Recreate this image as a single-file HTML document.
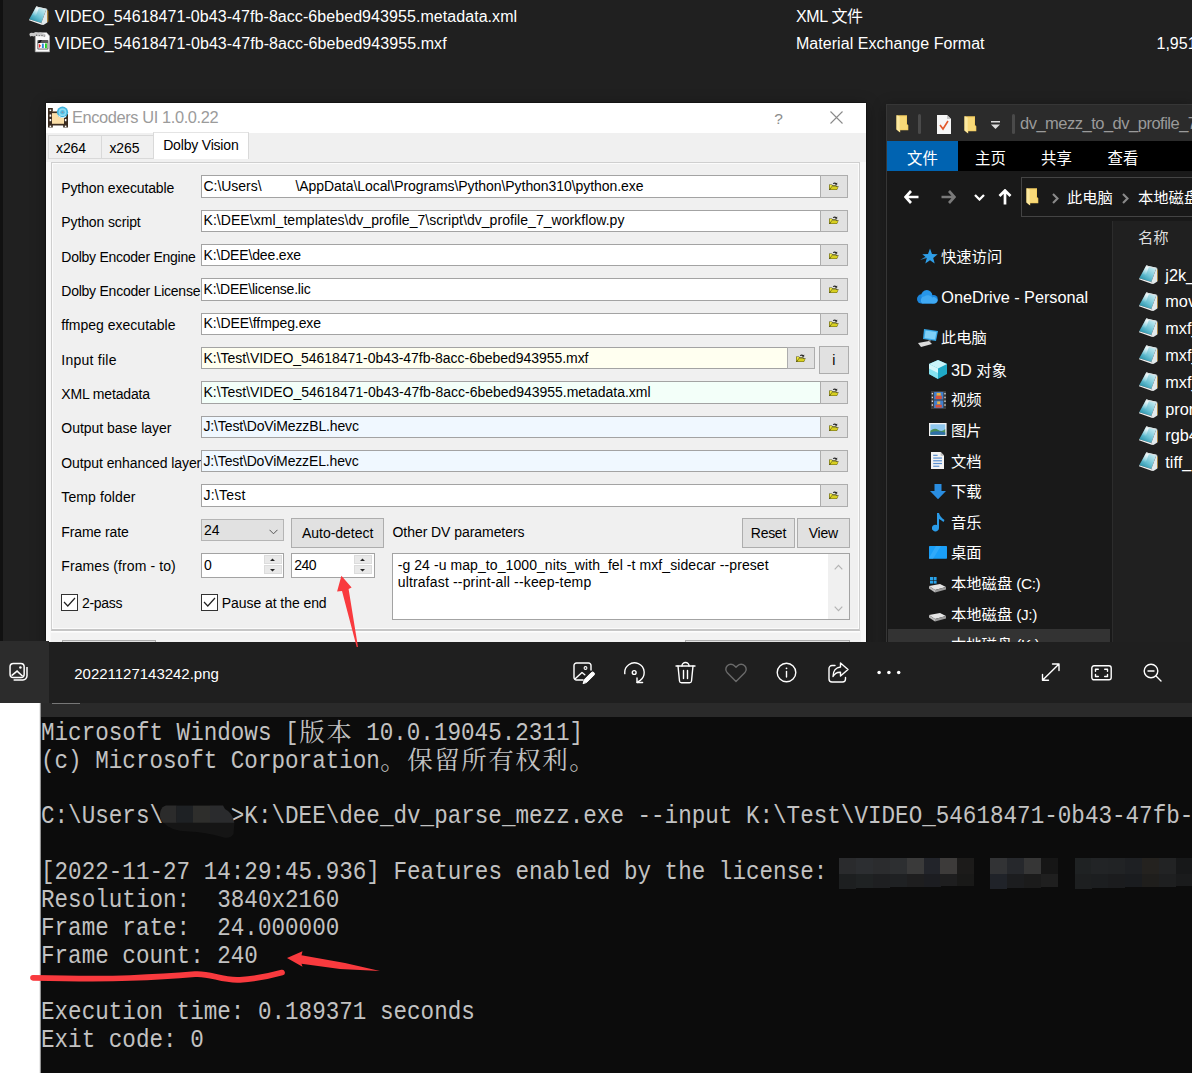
<!DOCTYPE html><html lang="zh-CN"><head><meta charset="utf-8"><title>screenshot</title><style>
*{box-sizing:border-box;margin:0;padding:0}
html,body{width:1192px;height:1073px;overflow:hidden;background:#202020}
body{position:relative;font-family:"Liberation Sans","Noto Sans CJK SC",sans-serif;color:#fff}
.abs{position:absolute}
.t{position:absolute;white-space:pre}
#enc{position:absolute;left:46px;top:103px;width:820px;height:545px;background:#f0f0f0;color:#000;font-size:14px;box-shadow:0 0 0 .6px rgba(0,0,0,.45),0 3px 14px rgba(0,0,0,.38)}
#enc .title{position:absolute;left:0;top:0;width:820px;height:30px;background:#fff}
#enc .inp{position:absolute;left:155px;height:22.4px;border:1px solid #a3a3a3;background:#fff}
#enc .btn{position:absolute;background:#e1e1e1;border:1px solid #adadad}
#enc .tab{position:absolute;border:1px solid #d9d9d9;background:#f0f0f0}
#ex2{position:absolute;left:886px;top:104px;width:306px;height:545px;background:#191919;overflow:hidden;box-shadow:0 2px 12px rgba(0,0,0,.35)}
#bar{position:absolute;left:0;top:642px;width:1192px;height:61px;background:#1f1f1f}
#cmd{position:absolute;left:40px;top:703px;width:1152px;height:370px;background:#0c0c0c;overflow:hidden}
.ln{position:absolute;left:0;white-space:pre;color:#c2c2c2;font-family:"Liberation Mono","Noto Serif CJK SC",monospace;font-size:26.5px;line-height:30px;height:30px;transform-origin:0 50%;transform:scaleX(.8525)}
.ln .cj{font-family:"Noto Serif CJK SC","Noto Sans CJK SC",serif;font-size:25.5px;display:inline-block;line-height:30px;vertical-align:top;text-align:left;white-space:pre}
.ln .cj b{display:inline-block;font-weight:normal;letter-spacing:1.5px;transform-origin:0 50%;transform:scaleX(1.173);position:relative;left:.9px;top:-2.6px}
</style></head><body>
<div class="abs" style="left:0;top:0;width:3px;height:642px;background:#111"></div>
<svg width="0" height="0" style="position:absolute"><defs><linearGradient id="ng" x1=".1" y1=".95" x2=".75" y2=".05"><stop offset="0" stop-color="#1b87a0"/><stop offset=".45" stop-color="#69c1d4"/><stop offset="1" stop-color="#c9ecf2"/></linearGradient><linearGradient id="nh" x1=".6" y1="0" x2=".35" y2="1"><stop offset="0" stop-color="#fff" stop-opacity=".9"/><stop offset=".65" stop-color="#fff" stop-opacity="0"/></linearGradient></defs></svg>
<svg class="abs" style="left:29.3px;top:5.8px" width="19.3" height="19" viewBox="0 0 19.3 19"><path d="M7.3 .6 L17.5 2.8 L12.3 17 L.2 13.2Z" fill="url(#ng)"/><path d="M7.3 .6 L10.2 1.2 L5 14.7 L.2 13.2Z" fill="url(#nh)"/><path d="M17.5 2.8 L18.3 3.5 V16.5 L14.5 19 L12.3 17Z" fill="#e3eaec"/><path d="M18.3 4 L19.3 5 V15.5 L18.3 16.5Z" fill="#c8922e"/><path d="M.2 13.2 L12.3 17 L14.5 19 L13.3 19 L0 14.3Z" fill="#f2f2f2"/><path d="M7.3 .6 L17.5 2.8 L17.2 3.7 L7 1.5Z" fill="#dde1e1"/></svg>
<svg class="abs" style="left:28.5px;top:32px" width="21" height="20.5" viewBox="0 0 21 20.5"><path d="M6.2 .5 H17.5 L20.7 4 V19.9 H6.2 Z" fill="#fbfbfb" stroke="#8f8f8f" stroke-width=".7"/><path d="M.3 2 q1.5 -2 4 -1 q2.5 -1.5 5 0 q2.5 -1 4.5 .5 q2 -.5 3 1.5 l-.8 2.2 q-1.5 -1.2 -3 -.6 q-2 -1.3 -4 -.2 q-2.3 -1.2 -4.4 0 q-1.8 -.9 -3.5 .2 Z" fill="#c9c9c9"/><g fill="#6b6b6b"><circle cx="7.6" cy="3.3" r=".7"/><circle cx="10.3" cy="3.6" r=".7"/><circle cx="13" cy="3.4" r=".7"/><circle cx="15.3" cy="4" r=".6"/></g><rect x="8.4" y="8" width="11" height="9.6" rx=".8" fill="#585858"/><path d="M8.6 11 L10.8 8 L13 8.2 L11 11Z" fill="#111"/><rect x="9.3" y="11" width="9.2" height="5.6" fill="#fdfdfd"/><path d="M9.9 11.4 L12 13.8 L9.9 16.2 Z" fill="#f02828"/><rect x="12.9" y="11.6" width="1.9" height="4.4" fill="#2f86d8"/><rect x="16" y="11.4" width="1.9" height="4.8" fill="#22d322"/></svg>
<div class="t" style="left:54.7px;top:7.00px;font-size:16px;line-height:20px;height:20px;letter-spacing:0.064px;">VIDEO_54618471-0b43-47fb-8acc-6bebed943955.metadata.xml</div>
<div class="t" style="left:54.7px;top:34.20px;font-size:16px;line-height:20px;height:20px;letter-spacing:0.071px;">VIDEO_54618471-0b43-47fb-8acc-6bebed943955.mxf</div>
<div class="t" style="left:796px;top:7.00px;font-size:16px;line-height:20px;height:20px;letter-spacing:-0.328px;">XML 文件</div>
<div class="t" style="left:796px;top:34.20px;font-size:16px;line-height:20px;height:20px;letter-spacing:0.04px;">Material Exchange Format</div>
<div class="t" style="left:1156.5px;top:34.20px;font-size:16px;line-height:20px;height:20px;">1,951</div>
<div id="enc">
<div class="title"></div>
<svg class="abs" style="left:2px;top:2px" width="22" height="23" viewBox="0 0 22 23"><rect x="0" y="3" width="4.8" height="19.5" fill="#3b2c20"/><rect x="15.2" y="9" width="4.8" height="13.5" fill="#3b2c20"/><rect x="4" y="6.5" width="12" height="13.5" fill="#fbdfa8"/><rect x="0" y="6.5" width="10" height="1.6" fill="#3b2c20"/><rect x="0" y="18.8" width="20" height="1.7" fill="#3b2c20"/><g fill="#fff"><rect x="1.6" y="4.5" width="1.6" height="1.6"/><rect x="1.6" y="9.5" width="1.6" height="2.2"/><rect x="1.6" y="14" width="1.6" height="2.2"/><rect x="1.6" y="20.6" width="1.6" height="1.5"/><rect x="16.8" y="14" width="1.6" height="2.2"/><rect x="16.8" y="20.6" width="1.6" height="1.5"/></g><circle cx="14.5" cy="7.2" r="5.6" fill="#3fb4de"/><circle cx="14.5" cy="7.2" r="3.9" fill="#8fdcf2"/><circle cx="14.5" cy="7.2" r="2.3" fill="#4fbfe6"/><circle cx="14.5" cy="7.2" r="1" fill="#8a94a8"/><path d="M10.5 10.5 A5.6 5.6 0 0 0 18 11.5" stroke="#e9f8fd" stroke-width="1.1" fill="none"/></svg>
<div class="t" style="left:25.9px;top:4.30px;font-size:16.4px;line-height:20px;height:20px;letter-spacing:-0.384px;color:#9b9b9b;">Encoders UI 1.0.0.22</div>
<div class="t" style="left:728.3px;top:5.70px;font-size:15.5px;line-height:19px;height:19px;color:#8c8c8c;">?</div>
<svg class="abs" style="left:784px;top:8px" width="13" height="13" viewBox="0 0 13 13"><path d="M.5 .5 L12.5 12.5 M12.5 .5 L.5 12.5" stroke="#8a8a8a" stroke-width="1.1" fill="none"/></svg>
<div class="tab" style="left:2px;top:32px;width:54px;height:24px"></div>
<div class="tab" style="left:55px;top:32px;width:53px;height:24px"></div>
<div class="tab" style="left:107px;top:29px;width:96px;height:27px;background:#fff;border-color:#e4e4e4 #d9d9d9;border-bottom:none"></div>
<div class="t" style="left:10px;top:36.30px;font-size:14px;line-height:18px;height:18px;letter-spacing:-0.09px;">x264</div>
<div class="t" style="left:63.5px;top:36.30px;font-size:14px;line-height:18px;height:18px;letter-spacing:-0.14px;">x265</div>
<div class="t" style="left:117.2px;top:33.30px;font-size:14px;line-height:18px;height:18px;letter-spacing:-0.189px;">Dolby Vision</div>
<div class="abs" style="left:0;top:59px;width:820px;height:490px;background:#f8f8f8"></div>
<div class="abs" style="left:5px;top:527px;width:810px;height:30px;background:#f2f2f2"></div>
<div class="abs" style="left:5px;top:59px;width:809px;height:468.5px;border:1px solid #cfcfcf;border-bottom:2px solid #c6c6c6;box-shadow:0 0 0 1px #fbfbfb inset,0 1.5px 0 #fdfdfd;background:#f0f0f0"></div>
<div class="t" style="left:15.3px;top:75.80px;font-size:14px;line-height:18px;height:18px;letter-spacing:-0.141px;">Python executable</div>
<div class="inp" style="top:72.20px;width:620px;background:#fff"></div>
<div class="t" style="left:157.5px;top:73.80px;font-size:14px;line-height:18px;height:18px;letter-spacing:-0.038px;">C:\Users\</div>
<div class="t" style="left:249.5px;top:73.80px;font-size:14px;line-height:18px;height:18px;letter-spacing:-0.059px;">\AppData\Local\Programs\Python\Python310\python.exe</div>
<div class="btn" style="left:774px;top:72.20px;width:28px;height:22.4px"></div>
<svg class="abs" style="left:783.2px;top:79.0px" width="10" height="8.3" viewBox="0 0 11 9"><path d="M4.2 1.4 q2 -1.6 4 -.2 l.8 -.7 v2.5 h-2.5 l.8 -.8 q-1.2 -.9 -2.4 0 Z" fill="#222"/><path d="M0 2.6 h3.2 l.8 .9 h4.3 v1 h2.4 l-1.9 4.2 H0 Z" fill="#5c5a18"/><path d="M.7 3.3 h2.2 l.8 .9 h3.9 v.6 H2.6 L.7 8 Z" fill="#f0e83a"/><path d="M3 5.3 h6.9 l-1.4 2.8 H1.4 Z" fill="#d8cf20"/></svg>
<div class="t" style="left:15.3px;top:110.15px;font-size:14px;line-height:18px;height:18px;letter-spacing:-0.126px;">Python script</div>
<div class="inp" style="top:106.55px;width:620px;background:#fff"></div>
<div class="t" style="left:157.5px;top:108.15px;font-size:14px;line-height:18px;height:18px;letter-spacing:0.048px;">K:\DEE\xml_templates\dv_profile_7\script\dv_profile_7_workflow.py</div>
<div class="btn" style="left:774px;top:106.55px;width:28px;height:22.4px"></div>
<svg class="abs" style="left:783.2px;top:113.4px" width="10" height="8.3" viewBox="0 0 11 9"><path d="M4.2 1.4 q2 -1.6 4 -.2 l.8 -.7 v2.5 h-2.5 l.8 -.8 q-1.2 -.9 -2.4 0 Z" fill="#222"/><path d="M0 2.6 h3.2 l.8 .9 h4.3 v1 h2.4 l-1.9 4.2 H0 Z" fill="#5c5a18"/><path d="M.7 3.3 h2.2 l.8 .9 h3.9 v.6 H2.6 L.7 8 Z" fill="#f0e83a"/><path d="M3 5.3 h6.9 l-1.4 2.8 H1.4 Z" fill="#d8cf20"/></svg>
<div class="t" style="left:15.3px;top:144.50px;font-size:14px;line-height:18px;height:18px;letter-spacing:-0.256px;">Dolby Encoder Engine</div>
<div class="inp" style="top:140.90px;width:620px;background:#fff"></div>
<div class="t" style="left:157.5px;top:142.50px;font-size:14px;line-height:18px;height:18px;letter-spacing:-0.152px;">K:\DEE\dee.exe</div>
<div class="btn" style="left:774px;top:140.90px;width:28px;height:22.4px"></div>
<svg class="abs" style="left:783.2px;top:147.7px" width="10" height="8.3" viewBox="0 0 11 9"><path d="M4.2 1.4 q2 -1.6 4 -.2 l.8 -.7 v2.5 h-2.5 l.8 -.8 q-1.2 -.9 -2.4 0 Z" fill="#222"/><path d="M0 2.6 h3.2 l.8 .9 h4.3 v1 h2.4 l-1.9 4.2 H0 Z" fill="#5c5a18"/><path d="M.7 3.3 h2.2 l.8 .9 h3.9 v.6 H2.6 L.7 8 Z" fill="#f0e83a"/><path d="M3 5.3 h6.9 l-1.4 2.8 H1.4 Z" fill="#d8cf20"/></svg>
<div class="t" style="left:15.3px;top:178.85px;font-size:14px;line-height:18px;height:18px;letter-spacing:-0.242px;">Dolby Encoder License</div>
<div class="inp" style="top:175.25px;width:620px;background:#fff"></div>
<div class="t" style="left:157.5px;top:176.85px;font-size:14px;line-height:18px;height:18px;letter-spacing:-0.194px;">K:\DEE\license.lic</div>
<div class="btn" style="left:774px;top:175.25px;width:28px;height:22.4px"></div>
<svg class="abs" style="left:783.2px;top:182.1px" width="10" height="8.3" viewBox="0 0 11 9"><path d="M4.2 1.4 q2 -1.6 4 -.2 l.8 -.7 v2.5 h-2.5 l.8 -.8 q-1.2 -.9 -2.4 0 Z" fill="#222"/><path d="M0 2.6 h3.2 l.8 .9 h4.3 v1 h2.4 l-1.9 4.2 H0 Z" fill="#5c5a18"/><path d="M.7 3.3 h2.2 l.8 .9 h3.9 v.6 H2.6 L.7 8 Z" fill="#f0e83a"/><path d="M3 5.3 h6.9 l-1.4 2.8 H1.4 Z" fill="#d8cf20"/></svg>
<div class="t" style="left:15.3px;top:213.20px;font-size:14px;line-height:18px;height:18px;letter-spacing:0.003px;">ffmpeg executable</div>
<div class="inp" style="top:209.60px;width:620px;background:#fff"></div>
<div class="t" style="left:157.5px;top:211.20px;font-size:14px;line-height:18px;height:18px;letter-spacing:-0.077px;">K:\DEE\ffmpeg.exe</div>
<div class="btn" style="left:774px;top:209.60px;width:28px;height:22.4px"></div>
<svg class="abs" style="left:783.2px;top:216.4px" width="10" height="8.3" viewBox="0 0 11 9"><path d="M4.2 1.4 q2 -1.6 4 -.2 l.8 -.7 v2.5 h-2.5 l.8 -.8 q-1.2 -.9 -2.4 0 Z" fill="#222"/><path d="M0 2.6 h3.2 l.8 .9 h4.3 v1 h2.4 l-1.9 4.2 H0 Z" fill="#5c5a18"/><path d="M.7 3.3 h2.2 l.8 .9 h3.9 v.6 H2.6 L.7 8 Z" fill="#f0e83a"/><path d="M3 5.3 h6.9 l-1.4 2.8 H1.4 Z" fill="#d8cf20"/></svg>
<div class="t" style="left:15.3px;top:247.55px;font-size:14px;line-height:18px;height:18px;letter-spacing:0.246px;">Input file</div>
<div class="inp" style="top:243.95px;width:587px;background:#fffff0"></div>
<div class="t" style="left:157.5px;top:245.55px;font-size:14px;line-height:18px;height:18px;letter-spacing:-0.034px;">K:\Test\VIDEO_54618471-0b43-47fb-8acc-6bebed943955.mxf</div>
<div class="btn" style="left:741px;top:243.95px;width:28px;height:22.4px"></div>
<svg class="abs" style="left:750.2px;top:250.8px" width="10" height="8.3" viewBox="0 0 11 9"><path d="M4.2 1.4 q2 -1.6 4 -.2 l.8 -.7 v2.5 h-2.5 l.8 -.8 q-1.2 -.9 -2.4 0 Z" fill="#222"/><path d="M0 2.6 h3.2 l.8 .9 h4.3 v1 h2.4 l-1.9 4.2 H0 Z" fill="#5c5a18"/><path d="M.7 3.3 h2.2 l.8 .9 h3.9 v.6 H2.6 L.7 8 Z" fill="#f0e83a"/><path d="M3 5.3 h6.9 l-1.4 2.8 H1.4 Z" fill="#d8cf20"/></svg>
<div class="btn" style="left:773.3px;top:242.85px;width:29.5px;height:28.4px"></div>
<div class="t" style="left:786.3px;top:248.15px;font-size:14px;line-height:18px;height:18px;">i</div>
<div class="t" style="left:15.3px;top:281.90px;font-size:14px;line-height:18px;height:18px;letter-spacing:-0.161px;">XML metadata</div>
<div class="inp" style="top:278.30px;width:620px;background:#f3fff9"></div>
<div class="t" style="left:157.5px;top:279.90px;font-size:14px;line-height:18px;height:18px;letter-spacing:-0.021px;">K:\Test\VIDEO_54618471-0b43-47fb-8acc-6bebed943955.metadata.xml</div>
<div class="btn" style="left:774px;top:278.30px;width:28px;height:22.4px"></div>
<svg class="abs" style="left:783.2px;top:285.1px" width="10" height="8.3" viewBox="0 0 11 9"><path d="M4.2 1.4 q2 -1.6 4 -.2 l.8 -.7 v2.5 h-2.5 l.8 -.8 q-1.2 -.9 -2.4 0 Z" fill="#222"/><path d="M0 2.6 h3.2 l.8 .9 h4.3 v1 h2.4 l-1.9 4.2 H0 Z" fill="#5c5a18"/><path d="M.7 3.3 h2.2 l.8 .9 h3.9 v.6 H2.6 L.7 8 Z" fill="#f0e83a"/><path d="M3 5.3 h6.9 l-1.4 2.8 H1.4 Z" fill="#d8cf20"/></svg>
<div class="t" style="left:15.3px;top:316.25px;font-size:14px;line-height:18px;height:18px;letter-spacing:-0.019px;">Output base layer</div>
<div class="inp" style="top:312.65px;width:620px;background:#f0f8ff"></div>
<div class="t" style="left:157.5px;top:314.25px;font-size:14px;line-height:18px;height:18px;letter-spacing:-0.138px;">J:\Test\DoViMezzBL.hevc</div>
<div class="btn" style="left:774px;top:312.65px;width:28px;height:22.4px"></div>
<svg class="abs" style="left:783.2px;top:319.5px" width="10" height="8.3" viewBox="0 0 11 9"><path d="M4.2 1.4 q2 -1.6 4 -.2 l.8 -.7 v2.5 h-2.5 l.8 -.8 q-1.2 -.9 -2.4 0 Z" fill="#222"/><path d="M0 2.6 h3.2 l.8 .9 h4.3 v1 h2.4 l-1.9 4.2 H0 Z" fill="#5c5a18"/><path d="M.7 3.3 h2.2 l.8 .9 h3.9 v.6 H2.6 L.7 8 Z" fill="#f0e83a"/><path d="M3 5.3 h6.9 l-1.4 2.8 H1.4 Z" fill="#d8cf20"/></svg>
<div class="t" style="left:15.3px;top:350.60px;font-size:14px;line-height:18px;height:18px;letter-spacing:-0.084px;">Output enhanced layer</div>
<div class="inp" style="top:347.00px;width:620px;background:#f0f8ff"></div>
<div class="t" style="left:157.5px;top:348.60px;font-size:14px;line-height:18px;height:18px;letter-spacing:-0.151px;">J:\Test\DoViMezzEL.hevc</div>
<div class="btn" style="left:774px;top:347.00px;width:28px;height:22.4px"></div>
<svg class="abs" style="left:783.2px;top:353.8px" width="10" height="8.3" viewBox="0 0 11 9"><path d="M4.2 1.4 q2 -1.6 4 -.2 l.8 -.7 v2.5 h-2.5 l.8 -.8 q-1.2 -.9 -2.4 0 Z" fill="#222"/><path d="M0 2.6 h3.2 l.8 .9 h4.3 v1 h2.4 l-1.9 4.2 H0 Z" fill="#5c5a18"/><path d="M.7 3.3 h2.2 l.8 .9 h3.9 v.6 H2.6 L.7 8 Z" fill="#f0e83a"/><path d="M3 5.3 h6.9 l-1.4 2.8 H1.4 Z" fill="#d8cf20"/></svg>
<div class="t" style="left:15.3px;top:384.95px;font-size:14px;line-height:18px;height:18px;letter-spacing:0.104px;">Temp folder</div>
<div class="inp" style="top:381.35px;width:620px;background:#fff"></div>
<div class="t" style="left:157.5px;top:382.95px;font-size:14px;line-height:18px;height:18px;letter-spacing:0.233px;">J:\Test</div>
<div class="btn" style="left:774px;top:381.35px;width:28px;height:22.4px"></div>
<svg class="abs" style="left:783.2px;top:388.2px" width="10" height="8.3" viewBox="0 0 11 9"><path d="M4.2 1.4 q2 -1.6 4 -.2 l.8 -.7 v2.5 h-2.5 l.8 -.8 q-1.2 -.9 -2.4 0 Z" fill="#222"/><path d="M0 2.6 h3.2 l.8 .9 h4.3 v1 h2.4 l-1.9 4.2 H0 Z" fill="#5c5a18"/><path d="M.7 3.3 h2.2 l.8 .9 h3.9 v.6 H2.6 L.7 8 Z" fill="#f0e83a"/><path d="M3 5.3 h6.9 l-1.4 2.8 H1.4 Z" fill="#d8cf20"/></svg>
<div class="t" style="left:15.3px;top:419.80px;font-size:14px;line-height:18px;height:18px;letter-spacing:-0.097px;">Frame rate</div>
<div class="abs" style="left:155px;top:416.4px;width:83px;height:22px;background:#e1e1e1;border:1px solid #b5b5b5"></div>
<div class="t" style="left:158px;top:418.30px;font-size:14px;line-height:18px;height:18px;">24</div>
<svg class="abs" style="left:223px;top:425.5px" width="9" height="6" viewBox="0 0 9 6"><path d="M.5 .8 L4.5 4.8 L8.5 .8" stroke="#555" stroke-width="1" fill="none"/></svg>
<div class="btn" style="left:245px;top:415px;width:93px;height:29.5px"></div>
<div class="t" style="left:256px;top:421.20px;font-size:14px;line-height:18px;height:18px;letter-spacing:-0.028px;">Auto-detect</div>
<div class="t" style="left:346.5px;top:419.80px;font-size:14px;line-height:18px;height:18px;letter-spacing:-0.056px;">Other DV parameters</div>
<div class="btn" style="left:696px;top:415.3px;width:53px;height:29.5px"></div>
<div class="t" style="left:704.8px;top:421.20px;font-size:14px;line-height:18px;height:18px;letter-spacing:-0.276px;">Reset</div>
<div class="btn" style="left:751px;top:415.3px;width:53px;height:29.5px"></div>
<div class="t" style="left:762.8px;top:421.20px;font-size:14px;line-height:18px;height:18px;letter-spacing:-0.273px;">View</div>
<div class="t" style="left:15.3px;top:454.20px;font-size:14px;line-height:18px;height:18px;letter-spacing:0.095px;">Frames (from - to)</div>
<div class="abs" style="left:155px;top:450px;width:83px;height:25px;background:#fff;border:1px solid #a3a3a3"></div><div class="abs" style="left:217.6px;top:452.2px;width:18px;height:9px;background:#e9e9e9;border:1px solid #dcdcdc"></div><div class="abs" style="left:217.6px;top:462.2px;width:18px;height:9.2px;background:#e9e9e9;border:1px solid #dcdcdc"></div><svg class="abs" style="left:224px;top:454.8px" width="5" height="14" viewBox="0 0 5 14"><path d="M0 3 L2.5 .5 L5 3 Z M0 11 L2.5 13.5 L5 11 Z" fill="#222"/></svg>
<div class="t" style="left:158px;top:452.60px;font-size:14px;line-height:18px;height:18px;">0</div>
<div class="abs" style="left:245px;top:450px;width:83.7px;height:25px;background:#fff;border:1px solid #a3a3a3"></div><div class="abs" style="left:308px;top:452.2px;width:18px;height:9px;background:#e9e9e9;border:1px solid #dcdcdc"></div><div class="abs" style="left:308px;top:462.2px;width:18px;height:9.2px;background:#e9e9e9;border:1px solid #dcdcdc"></div><svg class="abs" style="left:314.4px;top:454.8px" width="5" height="14" viewBox="0 0 5 14"><path d="M0 3 L2.5 .5 L5 3 Z M0 11 L2.5 13.5 L5 11 Z" fill="#222"/></svg>
<div class="t" style="left:248.2px;top:452.60px;font-size:14px;line-height:18px;height:18px;letter-spacing:-0.52px;">240</div>
<div class="abs" style="left:346px;top:450px;width:458px;height:66.5px;background:#fff;border:1px solid #a3a3a3"></div>
<div class="abs" style="left:781.5px;top:451px;width:21.5px;height:64.5px;background:#f0f0f0"></div>
<svg class="abs" style="left:788px;top:461px" width="9" height="6" viewBox="0 0 9 6"><path d="M.7 5.3 L4.5 1.3 L8.3 5.3" stroke="#b4b4b4" stroke-width="1.2" fill="none"/></svg>
<svg class="abs" style="left:788px;top:503px" width="9" height="6" viewBox="0 0 9 6"><path d="M.7 .7 L4.5 4.7 L8.3 .7" stroke="#b4b4b4" stroke-width="1.2" fill="none"/></svg>
<div class="t" style="left:351.7px;top:452.70px;font-size:14px;line-height:18px;height:18px;letter-spacing:0.077px;">-g 24 -u map_to_1000_nits_with_fel -t mxf_sidecar --preset</div>
<div class="t" style="left:351.7px;top:469.70px;font-size:14px;line-height:18px;height:18px;letter-spacing:0.164px;">ultrafast --print-all --keep-temp</div>
<div class="abs" style="left:15px;top:491px;width:17px;height:17px;background:#fff;border:1px solid #333"></div><svg class="abs" style="left:17px;top:494px" width="13" height="11" viewBox="0 0 13 11"><path d="M1 5 L4.8 9 L12 1" stroke="#222" stroke-width="1.2" fill="none"/></svg>
<div class="t" style="left:36px;top:490.80px;font-size:14px;line-height:18px;height:18px;letter-spacing:-0.289px;">2-pass</div>
<div class="abs" style="left:155px;top:491px;width:17px;height:17px;background:#fff;border:1px solid #333"></div><svg class="abs" style="left:157px;top:494px" width="13" height="11" viewBox="0 0 13 11"><path d="M1 5 L4.8 9 L12 1" stroke="#222" stroke-width="1.2" fill="none"/></svg>
<div class="t" style="left:175.8px;top:490.80px;font-size:14px;line-height:18px;height:18px;letter-spacing:-0.067px;">Pause at the end</div>
<div class="btn" style="left:16px;top:537px;width:94px;height:20px"></div>
<div class="btn" style="left:639px;top:537px;width:165px;height:20px"></div>
</div>
<div id="ex2">
<div class="abs" style="left:0;top:0;width:306px;height:37px;background:#2b2b2b"></div>
<div class="abs" style="left:0;top:37px;width:306px;height:30px;background:#000"></div>
<div class="abs" style="left:0;top:37px;width:72px;height:30px;background:#0063b1"></div>
<svg class="abs" style="left:9.7px;top:10.5px" width="13" height="18" viewBox="0 0 13 18"><path d="M.5 .3 H11 V9 L12.3 10.2 V15.3 H4.2 V17.5 L.5 14.5 Z" fill="#f4cd60"/><path d="M3.8 1.5 H10.2 V9.5 L11.5 10.7 V14.5 H3.8Z" fill="#f8d978"/><path d="M.5 .3 L3.8 1.5 V17.3 L.5 14.5 Z" fill="#fce9a0"/></svg>
<div class="abs" style="left:32.3px;top:10px;width:3.2px;height:20px;background:#4a4a4a;border-radius:1.6px"></div>
<svg class="abs" style="left:51px;top:11px" width="14" height="19" viewBox="0 0 14 19"><path d="M0 0 H10 L14 4 V19 H0 Z" fill="#f6f6f6"/><path d="M10 0 V4 H14 Z" fill="#c8c8c8"/><path d="M3 10 L6 14 L11 6" stroke="#e2582a" stroke-width="1.6" fill="none"/></svg>
<svg class="abs" style="left:78px;top:11.5px" width="13" height="18" viewBox="0 0 13 18"><path d="M.5 .3 H11 V9 L12.3 10.2 V15.3 H4.2 V17.5 L.5 14.5 Z" fill="#f4cd60"/><path d="M3.8 1.5 H10.2 V9.5 L11.5 10.7 V14.5 H3.8Z" fill="#f8d978"/><path d="M.5 .3 L3.8 1.5 V17.3 L.5 14.5 Z" fill="#fce9a0"/></svg>
<svg class="abs" style="left:105px;top:17px" width="9" height="8" viewBox="0 0 9 8"><rect x="0" y="0" width="9" height="1.5" fill="#ddd"/><path d="M0 3.5 H9 L4.5 8 Z" fill="#ddd"/></svg>
<div class="abs" style="left:125.5px;top:10px;width:3.2px;height:20px;background:#4a4a4a;border-radius:1.6px"></div>
<div class="t" style="left:134px;top:9.10px;font-size:16.5px;line-height:21px;height:21px;letter-spacing:-0.502px;color:#9a9a9a;">dv_mezz_to_dv_profile_7</div>
<div class="t" style="left:21.1px;top:44.60px;font-size:15.4px;line-height:20px;height:20px;color:#fff;">文件</div>
<div class="t" style="left:89.1px;top:44.60px;font-size:15.4px;line-height:20px;height:20px;color:#fff;">主页</div>
<div class="t" style="left:155.1px;top:44.60px;font-size:15.4px;line-height:20px;height:20px;color:#fff;">共享</div>
<div class="t" style="left:221.6px;top:44.60px;font-size:15.4px;line-height:20px;height:20px;color:#fff;">查看</div>
<svg class="abs" style="left:18px;top:86px" width="15" height="14" viewBox="0 0 15 14"><path d="M7 1 L1.5 7 L7 13 M1.5 7 H14.5" stroke="#fff" stroke-width="2.7" fill="none"/></svg>
<svg class="abs" style="left:55px;top:86px" width="15" height="14" viewBox="0 0 15 14"><path d="M8 1 L13.5 7 L8 13 M13.5 7 H.5" stroke="#7a7a7a" stroke-width="2.7" fill="none"/></svg>
<svg class="abs" style="left:88px;top:90px" width="11" height="7" viewBox="0 0 11 7"><path d="M1 1 L5.5 5.5 L10 1" stroke="#fff" stroke-width="2.3" fill="none"/></svg>
<svg class="abs" style="left:112px;top:85px" width="14" height="16" viewBox="0 0 14 16"><path d="M1.5 7 L7 1.5 L12.5 7 M7 1.5 V15.5" stroke="#fff" stroke-width="2.7" fill="none"/></svg>
<div class="abs" style="left:135px;top:73px;width:180px;height:40px;border:1px solid #444;background:#191919"></div>
<svg class="abs" style="left:140px;top:84px" width="13" height="18" viewBox="0 0 13 18"><path d="M.5 .3 H11 V9 L12.3 10.2 V15.3 H4.2 V17.5 L.5 14.5 Z" fill="#f4cd60"/><path d="M3.8 1.5 H10.2 V9.5 L11.5 10.7 V14.5 H3.8Z" fill="#f8d978"/><path d="M.5 .3 L3.8 1.5 V17.3 L.5 14.5 Z" fill="#fce9a0"/></svg>
<svg class="abs" style="left:166px;top:88.5px" width="7" height="11" viewBox="0 0 7 11"><path d="M1 1 L5.5 5.5 L1 10" stroke="#8a8a8a" stroke-width="2.1" fill="none"/></svg>
<div class="t" style="left:181px;top:84.00px;font-size:15.3px;line-height:20px;height:20px;color:#fff;">此电脑</div>
<svg class="abs" style="left:236px;top:88.5px" width="7" height="11" viewBox="0 0 7 11"><path d="M1 1 L5.5 5.5 L1 10" stroke="#8a8a8a" stroke-width="2.1" fill="none"/></svg>
<div class="t" style="left:252px;top:84.00px;font-size:15.3px;line-height:20px;height:20px;color:#fff;">本地磁盘<span style="font-size:15.4px;letter-spacing:-.35px"> (J:)</span></div>
<div class="abs" style="left:226px;top:117px;width:100px;height:440px;background:#202020;border-left:1px solid #2c2c2c"></div>
<div class="t" style="left:252px;top:123.60px;font-size:15.3px;line-height:20px;height:20px;color:#dedede;">名称</div>
<svg class="abs" style="left:252.9px;top:160.7px" width="19.3" height="19" viewBox="0 0 19.3 19"><path d="M7.3 .6 L17.5 2.8 L12.3 17 L.2 13.2Z" fill="url(#ng)"/><path d="M7.3 .6 L10.2 1.2 L5 14.7 L.2 13.2Z" fill="url(#nh)"/><path d="M17.5 2.8 L18.3 3.5 V16.5 L14.5 19 L12.3 17Z" fill="#e3eaec"/><path d="M18.3 4 L19.3 5 V15.5 L18.3 16.5Z" fill="#c8922e"/><path d="M.2 13.2 L12.3 17 L14.5 19 L13.3 19 L0 14.3Z" fill="#f2f2f2"/><path d="M7.3 .6 L17.5 2.8 L17.2 3.7 L7 1.5Z" fill="#dde1e1"/></svg>
<div class="t" style="left:279.3px;top:160.50px;font-size:16.3px;line-height:20px;height:20px;color:#fff;">j2k_</div>
<svg class="abs" style="left:252.9px;top:187.5px" width="19.3" height="19" viewBox="0 0 19.3 19"><path d="M7.3 .6 L17.5 2.8 L12.3 17 L.2 13.2Z" fill="url(#ng)"/><path d="M7.3 .6 L10.2 1.2 L5 14.7 L.2 13.2Z" fill="url(#nh)"/><path d="M17.5 2.8 L18.3 3.5 V16.5 L14.5 19 L12.3 17Z" fill="#e3eaec"/><path d="M18.3 4 L19.3 5 V15.5 L18.3 16.5Z" fill="#c8922e"/><path d="M.2 13.2 L12.3 17 L14.5 19 L13.3 19 L0 14.3Z" fill="#f2f2f2"/><path d="M7.3 .6 L17.5 2.8 L17.2 3.7 L7 1.5Z" fill="#dde1e1"/></svg>
<div class="t" style="left:279.3px;top:187.30px;font-size:16.3px;line-height:20px;height:20px;color:#fff;">mov</div>
<svg class="abs" style="left:252.9px;top:214.3px" width="19.3" height="19" viewBox="0 0 19.3 19"><path d="M7.3 .6 L17.5 2.8 L12.3 17 L.2 13.2Z" fill="url(#ng)"/><path d="M7.3 .6 L10.2 1.2 L5 14.7 L.2 13.2Z" fill="url(#nh)"/><path d="M17.5 2.8 L18.3 3.5 V16.5 L14.5 19 L12.3 17Z" fill="#e3eaec"/><path d="M18.3 4 L19.3 5 V15.5 L18.3 16.5Z" fill="#c8922e"/><path d="M.2 13.2 L12.3 17 L14.5 19 L13.3 19 L0 14.3Z" fill="#f2f2f2"/><path d="M7.3 .6 L17.5 2.8 L17.2 3.7 L7 1.5Z" fill="#dde1e1"/></svg>
<div class="t" style="left:279.3px;top:214.10px;font-size:16.3px;line-height:20px;height:20px;color:#fff;">mxf_</div>
<svg class="abs" style="left:252.9px;top:241.1px" width="19.3" height="19" viewBox="0 0 19.3 19"><path d="M7.3 .6 L17.5 2.8 L12.3 17 L.2 13.2Z" fill="url(#ng)"/><path d="M7.3 .6 L10.2 1.2 L5 14.7 L.2 13.2Z" fill="url(#nh)"/><path d="M17.5 2.8 L18.3 3.5 V16.5 L14.5 19 L12.3 17Z" fill="#e3eaec"/><path d="M18.3 4 L19.3 5 V15.5 L18.3 16.5Z" fill="#c8922e"/><path d="M.2 13.2 L12.3 17 L14.5 19 L13.3 19 L0 14.3Z" fill="#f2f2f2"/><path d="M7.3 .6 L17.5 2.8 L17.2 3.7 L7 1.5Z" fill="#dde1e1"/></svg>
<div class="t" style="left:279.3px;top:240.90px;font-size:16.3px;line-height:20px;height:20px;color:#fff;">mxf_</div>
<svg class="abs" style="left:252.9px;top:267.9px" width="19.3" height="19" viewBox="0 0 19.3 19"><path d="M7.3 .6 L17.5 2.8 L12.3 17 L.2 13.2Z" fill="url(#ng)"/><path d="M7.3 .6 L10.2 1.2 L5 14.7 L.2 13.2Z" fill="url(#nh)"/><path d="M17.5 2.8 L18.3 3.5 V16.5 L14.5 19 L12.3 17Z" fill="#e3eaec"/><path d="M18.3 4 L19.3 5 V15.5 L18.3 16.5Z" fill="#c8922e"/><path d="M.2 13.2 L12.3 17 L14.5 19 L13.3 19 L0 14.3Z" fill="#f2f2f2"/><path d="M7.3 .6 L17.5 2.8 L17.2 3.7 L7 1.5Z" fill="#dde1e1"/></svg>
<div class="t" style="left:279.3px;top:267.70px;font-size:16.3px;line-height:20px;height:20px;color:#fff;">mxf_</div>
<svg class="abs" style="left:252.9px;top:294.7px" width="19.3" height="19" viewBox="0 0 19.3 19"><path d="M7.3 .6 L17.5 2.8 L12.3 17 L.2 13.2Z" fill="url(#ng)"/><path d="M7.3 .6 L10.2 1.2 L5 14.7 L.2 13.2Z" fill="url(#nh)"/><path d="M17.5 2.8 L18.3 3.5 V16.5 L14.5 19 L12.3 17Z" fill="#e3eaec"/><path d="M18.3 4 L19.3 5 V15.5 L18.3 16.5Z" fill="#c8922e"/><path d="M.2 13.2 L12.3 17 L14.5 19 L13.3 19 L0 14.3Z" fill="#f2f2f2"/><path d="M7.3 .6 L17.5 2.8 L17.2 3.7 L7 1.5Z" fill="#dde1e1"/></svg>
<div class="t" style="left:279.3px;top:294.50px;font-size:16.3px;line-height:20px;height:20px;color:#fff;">prores</div>
<svg class="abs" style="left:252.9px;top:321.5px" width="19.3" height="19" viewBox="0 0 19.3 19"><path d="M7.3 .6 L17.5 2.8 L12.3 17 L.2 13.2Z" fill="url(#ng)"/><path d="M7.3 .6 L10.2 1.2 L5 14.7 L.2 13.2Z" fill="url(#nh)"/><path d="M17.5 2.8 L18.3 3.5 V16.5 L14.5 19 L12.3 17Z" fill="#e3eaec"/><path d="M18.3 4 L19.3 5 V15.5 L18.3 16.5Z" fill="#c8922e"/><path d="M.2 13.2 L12.3 17 L14.5 19 L13.3 19 L0 14.3Z" fill="#f2f2f2"/><path d="M7.3 .6 L17.5 2.8 L17.2 3.7 L7 1.5Z" fill="#dde1e1"/></svg>
<div class="t" style="left:279.3px;top:321.30px;font-size:16.3px;line-height:20px;height:20px;color:#fff;">rgb4</div>
<svg class="abs" style="left:252.9px;top:348.3px" width="19.3" height="19" viewBox="0 0 19.3 19"><path d="M7.3 .6 L17.5 2.8 L12.3 17 L.2 13.2Z" fill="url(#ng)"/><path d="M7.3 .6 L10.2 1.2 L5 14.7 L.2 13.2Z" fill="url(#nh)"/><path d="M17.5 2.8 L18.3 3.5 V16.5 L14.5 19 L12.3 17Z" fill="#e3eaec"/><path d="M18.3 4 L19.3 5 V15.5 L18.3 16.5Z" fill="#c8922e"/><path d="M.2 13.2 L12.3 17 L14.5 19 L13.3 19 L0 14.3Z" fill="#f2f2f2"/><path d="M7.3 .6 L17.5 2.8 L17.2 3.7 L7 1.5Z" fill="#dde1e1"/></svg>
<div class="t" style="left:279.3px;top:348.10px;font-size:16.3px;line-height:20px;height:20px;color:#fff;">tiff_</div>
<svg class="abs" style="left:34px;top:144px" width="18" height="17" viewBox="0 0 18 17"><path d="M10 .5 L12 6 L17.7 6.3 L13.2 9.9 L14.7 15.4 L10 12.3 L5.3 15.4 L6.8 9.9 L2.3 6.3 L8 6 Z" fill="#2f9fe8"/><path d="M0 12 L6.5 8 L7 10 Z" fill="#2f9fe8" opacity=".8"/></svg>
<div class="t" style="left:55px;top:143.10px;font-size:15.3px;line-height:20px;height:20px;color:#fff;">快速访问</div>
<svg class="abs" style="left:31.3px;top:186.3px" width="21" height="13.5" viewBox="0 0 21 13.5"><g fill="#1b86dc"><circle cx="4.6" cy="8.9" r="4.6"/><circle cx="16.6" cy="9.3" r="4.2"/><rect x="4.6" y="9" width="12" height="4.5"/></g><circle cx="9.8" cy="5.6" r="5.6" fill="#2696ea"/><path d="M5.5 13.5 a4 4 0 0 1 2 -7.3 a5.6 5.6 0 0 1 7.6 1.2 a4.2 4.2 0 0 1 5.6 3.3 a4.2 4.2 0 0 1 -4.1 2.8 Z" fill="#3fa9f3"/></svg>
<div class="t" style="left:55.3px;top:183.30px;font-size:16.3px;line-height:20px;height:20px;letter-spacing:-0.037px;color:#fff;">OneDrive - Personal</div>
<svg class="abs" style="left:31px;top:224px" width="22" height="20" viewBox="0 0 22 20"><path d="M7 1 L21 3 L19 13 L6 11 Z" fill="#35a6e6"/><path d="M8.5 2.5 L19.5 4 L18 11.5 L7.5 10 Z" fill="#7fd0f7"/><path d="M1 15 L12 13 L15 16 L4 19 Z" fill="#dcdcdc"/><path d="M11 12 L14 12.5 L13 14 Z" fill="#999"/></svg>
<div class="t" style="left:55px;top:224.10px;font-size:15.3px;line-height:20px;height:20px;color:#fff;">此电脑</div>
<svg class="abs" style="left:43px;top:255.5px" width="18" height="19" viewBox="0 0 18 19"><path d="M9 0 L18 4 V14 L9 19 L0 14 V4 Z" fill="#1fa9c6"/><path d="M9 0 L18 4 L9 8.5 L0 4 Z" fill="#c9f4fa"/><path d="M9 8.5 V19 L0 14 V4 Z" fill="#86e2ef"/><path d="M0 4 L9 8.5 V13 L0 8.5Z" fill="#d4f7fb"/></svg>
<div class="t" style="left:65px;top:255.70px;font-size:15.3px;line-height:20px;height:20px;color:#fff;"><span style="font-size:16.3px">3D </span>对象</div>
<svg class="abs" style="left:44.6px;top:286.6px" width="15.4" height="18" viewBox="0 0 15 19" preserveAspectRatio="none"><rect width="15" height="19" fill="#3b3b3b"/><rect x="3" y="1" width="9" height="8" fill="#3f7fd0"/><rect x="3" y="10" width="9" height="8" fill="#3f7fd0"/><rect x="5.5" y="2" width="4" height="3" fill="#e8b040"/><rect x="4.5" y="5" width="6" height="3.5" fill="#d8503a"/><rect x="6" y="11" width="3" height="3" fill="#e8b040"/><rect x="4.5" y="14.5" width="6" height="3" fill="#d8503a"/><g fill="#ddd"><rect x=".7" y="2" width="1.3" height="1.6"/><rect x=".7" y="6" width="1.3" height="1.6"/><rect x=".7" y="10" width="1.3" height="1.6"/><rect x=".7" y="14" width="1.3" height="1.6"/><rect x="13" y="2" width="1.3" height="1.6"/><rect x="13" y="6" width="1.3" height="1.6"/><rect x="13" y="10" width="1.3" height="1.6"/><rect x="13" y="14" width="1.3" height="1.6"/></g></svg>
<div class="t" style="left:65px;top:286.30px;font-size:15.3px;line-height:20px;height:20px;color:#fff;">视频</div>
<svg class="abs" style="left:43.2px;top:319.4px" width="17.6" height="13" viewBox="0 0 19 15" preserveAspectRatio="none"><rect width="19" height="15" fill="#f2f2f2"/><rect x="1.5" y="1.5" width="16" height="12" fill="#8fc7ee"/><path d="M1.5 9 Q6 5 10 8 T17.5 7 V13.5 H1.5 Z" fill="#4a8f5a"/><path d="M1.5 11 Q8 8 17.5 11 V13.5 H1.5Z" fill="#2f6fa8"/></svg>
<div class="t" style="left:65px;top:316.90px;font-size:15.3px;line-height:20px;height:20px;color:#fff;">图片</div>
<svg class="abs" style="left:44.9px;top:347.8px" width="13.2" height="17.3" viewBox="0 0 15 19" preserveAspectRatio="none"><path d="M0 0 H11 L15 4 V19 H0 Z" fill="#f4f4f4"/><path d="M11 0 V4 H15 Z" fill="#bcbcbc"/><g fill="#5a8fd0"><rect x="2.5" y="3" width="5" height="1.3"/><rect x="2.5" y="6" width="10" height="1.3"/><rect x="2.5" y="9" width="10" height="1.3"/><rect x="2.5" y="12" width="10" height="1.3"/><rect x="2.5" y="15" width="7" height="1.3"/></g></svg>
<div class="t" style="left:65px;top:347.50px;font-size:15.3px;line-height:20px;height:20px;color:#fff;">文档</div>
<svg class="abs" style="left:44px;top:379.5px" width="16" height="15.7" viewBox="0 0 16 18" preserveAspectRatio="none"><path d="M4.5 0 H11.5 V8 H16 L8 17.5 L0 8 H4.5 Z" fill="#2a8de0"/></svg>
<div class="t" style="left:65px;top:378.10px;font-size:15.3px;line-height:20px;height:20px;color:#fff;">下载</div>
<svg class="abs" style="left:46px;top:408.5px" width="13" height="19" viewBox="0 0 13 19"><path d="M5 0 H7 Q8 4 12.5 7 L11.5 9 Q9 7 7 6 V15 A3.6 3.4 0 1 1 5 12 Z" fill="#2a9be8"/></svg>
<div class="t" style="left:65px;top:408.70px;font-size:15.3px;line-height:20px;height:20px;color:#fff;">音乐</div>
<svg class="abs" style="left:43px;top:441.9px" width="18" height="12.7" viewBox="0 0 18 12.7"><rect width="18" height="12.7" rx=".6" fill="#1a9ff8"/><path d="M0 12 L7 0 H12 L4 12.7 H0Z" fill="#3fb2fb" opacity=".6"/></svg>
<div class="t" style="left:65px;top:439.30px;font-size:15.3px;line-height:20px;height:20px;color:#fff;">桌面</div>
<svg class="abs" style="left:42px;top:472.8px" width="19" height="16" viewBox="0 0 19 16"><path d="M1 9 L12 7 L18 10 L7 13 Z" fill="#e6e6e6"/><path d="M1 9 L7 13 V15.5 L1 11.5 Z" fill="#bdbdbd"/><path d="M7 13 L18 10 V12.5 L7 15.5 Z" fill="#9a9a9a"/><g fill="#29a3ea"><rect x="2" y="0" width="3" height="3"/><rect x="5.6" y="0" width="3" height="3"/><rect x="2" y="3.6" width="3" height="3"/><rect x="5.6" y="3.6" width="3" height="3"/></g></svg>
<div class="t" style="left:65px;top:469.90px;font-size:15.3px;line-height:20px;height:20px;color:#fff;">本地磁盘<span style="font-size:15.4px;letter-spacing:-.35px"> (C:)</span></div>
<svg class="abs" style="left:42px;top:507.6px" width="19" height="10" viewBox="0 0 19 10"><path d="M1 3 L12 1 L18 4 L7 7 Z" fill="#e6e6e6"/><path d="M1 3 L7 7 V9.5 L1 5.5 Z" fill="#bdbdbd"/><path d="M7 7 L18 4 V6.5 L7 9.5 Z" fill="#9a9a9a"/></svg>
<div class="t" style="left:65px;top:500.50px;font-size:15.3px;line-height:20px;height:20px;color:#fff;">本地磁盘<span style="font-size:15.4px;letter-spacing:-.35px"> (J:)</span></div>
<div class="abs" style="left:2px;top:524.9px;width:222px;height:30px;background:#333"></div>
<svg class="abs" style="left:42px;top:538.2px" width="19" height="10" viewBox="0 0 19 10"><path d="M1 3 L12 1 L18 4 L7 7 Z" fill="#e6e6e6"/><path d="M1 3 L7 7 V9.5 L1 5.5 Z" fill="#bdbdbd"/><path d="M7 7 L18 4 V6.5 L7 9.5 Z" fill="#9a9a9a"/></svg>
<div class="t" style="left:65px;top:531.10px;font-size:15.3px;line-height:20px;height:20px;color:#fff;">本地磁盘<span style="font-size:15.4px;letter-spacing:-.35px"> (K:)</span></div>
<div class="abs" style="left:0;top:0;width:306px;height:545px;border-left:1px solid #363636;border-top:1px solid #363636"></div>
</div>
<div id="bar">
<div class="abs" style="left:0;top:-1px;width:49px;height:62px;background:#2c2c2c"></div>
<svg class="abs" style="left:9px;top:20px" width="20" height="20" viewBox="0 0 20 20" fill="none" stroke="#fff" stroke-width="1.5"><rect x="1.05" y="1.55" width="14.1" height="13.9" rx="3.3"/><path d="M4.6 17.9 H13.9 a4.1 4.1 0 0 0 4.1 -4.1 V5"/><path d="M2.6 13.7 L8.1 9.1 L13.6 14.2" stroke-linejoin="miter"/><circle cx="11.4" cy="5.4" r="1.25" fill="#fff" stroke="none"/></svg>
<div class="t" style="left:74.3px;top:22.10px;font-size:15px;line-height:19px;height:19px;letter-spacing:-0.021px;color:#fff;">20221127143242.png</div>
<svg class="abs" style="left:572.7px;top:19.8px" width="23" height="23" viewBox="0 0 23 23" fill="none" stroke="#fff" stroke-width="1.4" stroke-linecap="round" stroke-linejoin="round"><path d="M10 18 H3.5 a2.5 2.5 0 0 1 -2.5 -2.5 V3.5 a2.5 2.5 0 0 1 2.5 -2.5 H15.5 a2.5 2.5 0 0 1 2.5 2.5 V8"/><path d="M2.2 16.8 L9 10.5 L11.8 12.8"/><circle cx="12.5" cy="6" r="1.4" stroke-width="1.1"/><path d="M10.2 21.3 L11.3 17.6 L18.3 10.6 a1.8 1.8 0 0 1 2.6 2.6 L13.9 20.2 Z" fill="#fff" stroke-width="1"/></svg>
<svg class="abs" style="left:623px;top:19px" width="23" height="24" viewBox="0 0 23 24" fill="none" stroke="#fff" stroke-width="1.4" stroke-linecap="round" stroke-linejoin="round"><path d="M1.8 12.6 A9.7 9.7 0 1 1 17.2 19.4 L14.2 21.4"/><path d="M14 17 V21.5 H19.6"/><circle cx="11.2" cy="11.5" r="1.9"/></svg>
<svg class="abs" style="left:675px;top:19px" width="21" height="23" viewBox="0 0 21 23" fill="none" stroke="#fff" stroke-width="1.4" stroke-linecap="round" stroke-linejoin="round"><path d="M1 5 H20"/><path d="M7 5 a3.5 3.5 0 0 1 7 0"/><path d="M3 5 L4.5 20 a2 2 0 0 0 2 1.8 H14.5 a2 2 0 0 0 2 -1.8 L18 5"/><path d="M8.5 9.5 V17.5 M12.5 9.5 V17.5"/></svg>
<svg class="abs" style="left:725.2px;top:20.7px" width="22" height="20" viewBox="0 0 22 20" fill="none" stroke="#6a6a6a" stroke-width="1.4" stroke-linejoin="round"><path d="M11 18.5 L2.3 9.8 a5 5 0 0 1 7.1 -7.1 L11 4.3 L12.6 2.7 a5 5 0 0 1 7.1 7.1 Z"/></svg>
<svg class="abs" style="left:776px;top:20px" width="21" height="21" viewBox="0 0 21 21" fill="none" stroke="#fff" stroke-width="1.4" stroke-linecap="round" stroke-linejoin="round"><circle cx="10.5" cy="10.5" r="9.3"/><path d="M10.5 9.5 V15"/><circle cx="10.5" cy="6.3" r=".9" fill="#fff" stroke="none"/></svg>
<svg class="abs" style="left:827px;top:19px" width="23" height="23" viewBox="0 0 23 23" fill="none" stroke="#fff" stroke-width="1.4" stroke-linecap="round" stroke-linejoin="round"><path d="M8 4.5 H5 a3 3 0 0 0 -3 3 V18 a3 3 0 0 0 3 3 H15.5 a3 3 0 0 0 3 -3 V16.5"/><path d="M13.5 2 L21 8.5 L13.5 15 V11.2 C10 11 7.5 12.5 6 15.5 C6 10 9 6.3 13.5 6 Z"/></svg>
<svg class="abs" style="left:877px;top:28px" width="26" height="5" viewBox="0 0 26 5" fill="#fff"><circle cx="2.1" cy="2.5" r="1.75"/><circle cx="11.9" cy="2.5" r="1.75"/><circle cx="21.7" cy="2.5" r="1.75"/></svg>
<svg class="abs" style="left:1041px;top:20.5px" width="19" height="19" viewBox="0 0 19 19" fill="none" stroke="#fff" stroke-width="1.4" stroke-linecap="round" stroke-linejoin="round"><path d="M1.5 17.2 L18 1 M11.5 1 H18 V7.5 M1.5 11.5 V17.2 H7.5"/></svg>
<svg class="abs" style="left:1091px;top:23px" width="21" height="16" viewBox="0 0 21 16" fill="none" stroke="#fff" stroke-width="1.4" stroke-linecap="round" stroke-linejoin="round"><rect x=".8" y=".8" width="19.4" height="14" rx="2.2"/><path d="M4.5 6.3 V4.3 H7.3 M13.7 4.3 H16.5 V6.3 M16.5 9.5 V11.5 H13.7 M7.3 11.5 H4.5 V9.5"/></svg>
<svg class="abs" style="left:1143px;top:20.5px" width="20" height="20" viewBox="0 0 20 20" fill="none" stroke="#fff" stroke-width="1.4" stroke-linecap="round" stroke-linejoin="round"><circle cx="8" cy="8" r="6.8"/><path d="M13 13 L18 18 M5 8 H11"/></svg>
</div>
<div class="abs" style="left:0;top:703px;width:41px;height:370px;background:linear-gradient(90deg,#fff 0,#fff 38.5px,#e8e8e8 39.7px,#8a8a8a 40.6px,#2a2a2a 41px)"></div>
<div id="cmd" style="left:41px;width:1151px">
<div class="abs" style="left:0;top:0;width:1152px;height:13.5px;background:#2a2a2a"></div>
<div class="abs" style="left:11px;top:0;width:28px;height:1px;background:#777"></div>
<div class="ln" style="top:14.70px">Microsoft Windows [<span class="cj" style="width:63.34px"><b>版本</b></span> 10.0.19045.2311]</div>
<div class="ln" style="top:42.60px">(c) Microsoft Corporation<span class="cj" style="width:253.36px"><b>。保留所有权利。</b></span></div>
<div class="ln" style="top:98.40px">C:\Users\<span style="display:inline-block;width:79.5px"></span>&gt;K:\DEE\dee_dv_parse_mezz.exe --input K:\Test\VIDEO_54618471-0b43-47fb-8acc-6bebed943955.mxf</div>
<div class="ln" style="top:154.20px">[2022-11-27 14:29:45.936] Features enabled by the license:</div>
<div class="ln" style="top:182.10px">Resolution:  3840x2160</div>
<div class="ln" style="top:210.00px">Frame rate:  24.000000</div>
<div class="ln" style="top:237.90px">Frame count: 240</div>
<div class="ln" style="top:293.70px">Execution time: 0.189371 seconds</div>
<div class="ln" style="top:321.60px">Exit code: 0</div>
<svg class="abs" style="left:115px;top:98px" width="84" height="42" viewBox="156 801 84 42"><path d="M163 822 H234.5 L233.5 834 Q230 839 224 837.5 Q205 832 188 831.5 Q170 831 163 822Z" fill="#151515"/><path d="M166 805.6 H176.6 V822.7 H163 Q158.5 818 160.5 811 Q162 806.5 166 805.6Z" fill="#2b2b2b"/><rect x="176.5" y="805.6" width="16.6" height="17.1" fill="#1e2124"/><rect x="193" y="805.6" width="17" height="17.1" fill="#2e2e2c"/><path d="M210 805.6 H223 L225 809 Q233 813 234.2 822.7 H210Z" fill="#2a2b2d"/></svg>
<div class="abs" style="left:798.0px;top:154.5px;width:17px;height:17px;background:#2a2b2d"></div>
<div class="abs" style="left:814.9px;top:154.5px;width:17px;height:17px;background:#2c2e31"></div>
<div class="abs" style="left:831.8px;top:154.5px;width:17px;height:17px;background:#2b2c2e"></div>
<div class="abs" style="left:848.7px;top:154.5px;width:17px;height:17px;background:#2d2f31"></div>
<div class="abs" style="left:865.6px;top:154.5px;width:17px;height:17px;background:#3a3a3a"></div>
<div class="abs" style="left:882.5px;top:154.5px;width:17px;height:17px;background:#22242a"></div>
<div class="abs" style="left:899.4px;top:154.5px;width:17px;height:17px;background:#3d3b3a"></div>
<div class="abs" style="left:916.3px;top:154.5px;width:17px;height:17px;background:#1c1b1a"></div>
<div class="abs" style="left:798.0px;top:171.0px;width:17px;height:14.5px;background:#1d1f20"></div>
<div class="abs" style="left:814.9px;top:171.0px;width:17px;height:14.2px;background:#1f2223"></div>
<div class="abs" style="left:831.8px;top:171.0px;width:17px;height:13.8px;background:#1e1f21"></div>
<div class="abs" style="left:848.7px;top:171.0px;width:17px;height:13.4px;background:#1f2123"></div>
<div class="abs" style="left:865.6px;top:171.0px;width:17px;height:13.1px;background:#1e1e1f"></div>
<div class="abs" style="left:882.5px;top:171.0px;width:17px;height:12.8px;background:#1c1d21"></div>
<div class="abs" style="left:899.4px;top:171.0px;width:17px;height:12.4px;background:#1e1e1f"></div>
<div class="abs" style="left:916.3px;top:171.0px;width:17px;height:12.1px;background:#191918"></div>
<div class="abs" style="left:949.0px;top:154.5px;width:17px;height:17px;background:#323335"></div>
<div class="abs" style="left:965.9px;top:154.5px;width:17px;height:17px;background:#26282c"></div>
<div class="abs" style="left:982.8px;top:154.5px;width:17px;height:17px;background:#363636"></div>
<div class="abs" style="left:999.7px;top:154.5px;width:17px;height:17px;background:#161616"></div>
<div class="abs" style="left:949.0px;top:171.0px;width:17px;height:14.5px;background:#202329"></div>
<div class="abs" style="left:965.9px;top:171.0px;width:17px;height:14.2px;background:#1c1d1f"></div>
<div class="abs" style="left:982.8px;top:171.0px;width:17px;height:13.8px;background:#1b1b1b"></div>
<div class="abs" style="left:999.7px;top:171.0px;width:17px;height:13.4px;background:#1f1f1f"></div>
<div class="abs" style="left:1033.5px;top:154.5px;width:17px;height:17px;background:#1f2223"></div>
<div class="abs" style="left:1050.4px;top:154.5px;width:17px;height:17px;background:#222426"></div>
<div class="abs" style="left:1067.3px;top:154.5px;width:17px;height:17px;background:#212325"></div>
<div class="abs" style="left:1084.2px;top:154.5px;width:17px;height:17px;background:#1e2023"></div>
<div class="abs" style="left:1101.1px;top:154.5px;width:17px;height:17px;background:#24221f"></div>
<div class="abs" style="left:1118.0px;top:154.5px;width:17px;height:17px;background:#222324"></div>
<div class="abs" style="left:1134.9px;top:154.5px;width:17px;height:17px;background:#171819"></div>
<div class="abs" style="left:1033.5px;top:171.0px;width:17px;height:14.5px;background:#1d1f20"></div>
<div class="abs" style="left:1050.4px;top:171.0px;width:17px;height:14.2px;background:#1c1e20"></div>
<div class="abs" style="left:1067.3px;top:171.0px;width:17px;height:13.8px;background:#1b1c1e"></div>
<div class="abs" style="left:1084.2px;top:171.0px;width:17px;height:13.4px;background:#1a1c1f"></div>
<div class="abs" style="left:1101.1px;top:171.0px;width:17px;height:13.1px;background:#1f1e1c"></div>
<div class="abs" style="left:1118.0px;top:171.0px;width:17px;height:12.8px;background:#1e1f20"></div>
<div class="abs" style="left:1134.9px;top:171.0px;width:17px;height:12.4px;background:#1a1b1c"></div>
</div>
<svg class="abs" style="left:330px;top:570px" width="40" height="80" viewBox="330 570 40 80"><path d="M341.4 575.7 L351.6 587.6 L348.6 588.9 L358 646.9 L356.7 646.9 L342 591 L337.1 591.6 Z" fill="#f93a3e"/></svg>
<svg class="abs" style="left:20px;top:940px" width="380" height="60" viewBox="20 940 380 60"><path d="M33 977.8 C70 978.6 100 979 130 978 S180 975.5 195 974.2 S222 981 240 979.8 S270 976 282 972.6" stroke="#f93a3e" stroke-width="5.7" fill="none" stroke-linecap="round" stroke-linejoin="round"/><path d="M287 958 L302.5 951.3 L301.5 955.3 L345 963 L380 970.9 L340 968.9 L301.5 963.7 L302.5 966.8 Z" fill="#f93a3e"/></svg>
</body></html>
